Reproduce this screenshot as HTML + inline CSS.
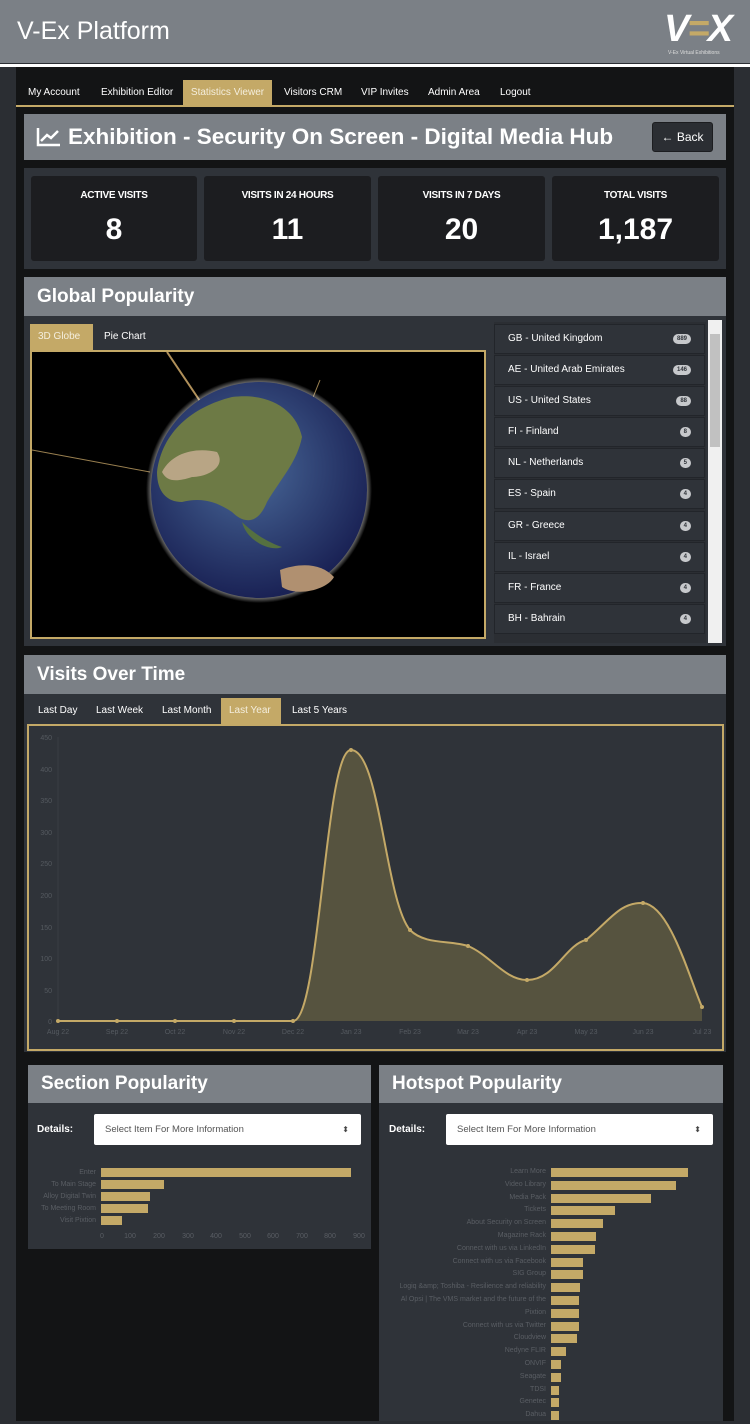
<!DOCTYPE html>
<html><head><meta charset="utf-8"><style>
*{box-sizing:border-box;margin:0;padding:0}
body{width:750px;height:1421px;background:#2b2e33;font-family:"Liberation Sans",sans-serif;color:#fff;position:relative;overflow:hidden}
.a{position:absolute}
.hdr{left:0;top:0;width:750px;height:63px;background:#7b8086}
.gray{background:#7b8086}
.pan{background:#2f3339}
.card{background:#1c1d20;border-radius:3px;text-align:center}
.card .l{font-size:10px;font-weight:bold;margin-top:14px;letter-spacing:-0.3px}
.card .n{font-size:30px;font-weight:bold;margin-top:12px}
.tab{font-size:10px;top:0;height:26px;line-height:26px;padding:0 8px}
.li{left:494px;width:211px;height:30px;background:#2f3339;border:1px solid #22252a;font-size:10px;line-height:28px;padding-left:13px}
.li b{position:absolute;right:13px;top:9px;background:#c7c9cc;color:#2f3339;font-size:6px;border-radius:6px;padding:1px 4px;line-height:8px}
.h2{font-size:19px;font-weight:bold;padding-left:13px}
.sel{background:#fff;border-radius:2px;color:#555;font-size:9.5px;line-height:31px;padding-left:11px}
.sel:after{content:"⬍";position:absolute;right:12px;font-size:8px;color:#444}
.bar{background:#c4a967;height:9px}
.lb{font-size:7px;color:#5a5e64;text-align:right}
.ax{position:absolute;top:1233px;font-size:7px;color:#5a5e64;width:20px;margin-left:-10px;text-align:center}
</style></head><body>
<div class="a hdr"></div>
<div class="a" style="left:17px;top:17px;font-size:25px;color:#fff">V-Ex Platform</div>
<div class="a" style="left:664px;top:9px;font-size:38px;font-style:italic;font-weight:bold;color:#fff;letter-spacing:-2px;line-height:40px">V<span style="color:#c4a967">=</span>X</div>
<div class="a" style="left:668px;top:50px;font-size:5px;color:#ddd">V-Ex Virtual Exhibitions</div>
<div class="a" style="left:0;top:64px;width:750px;height:3px;background:#fff"></div>
<div class="a" style="left:16px;top:67px;width:718px;height:1354px;background:#131415"></div>
<div class="a" style="left:28px;top:87px;font-size:10px">My Account</div>
<div class="a" style="left:101px;top:87px;font-size:10px">Exhibition Editor</div>
<div class="a" style="left:183px;top:80px;width:89px;height:26px;background:#c4a967;font-size:10px;line-height:25px;text-align:center;color:#f4eedd">Statistics Viewer</div>
<div class="a" style="left:284px;top:87px;font-size:10px">Visitors CRM</div>
<div class="a" style="left:361px;top:87px;font-size:10px">VIP Invites</div>
<div class="a" style="left:428px;top:87px;font-size:10px">Admin Area</div>
<div class="a" style="left:500px;top:87px;font-size:10px">Logout</div>
<div class="a" style="left:16px;top:105px;width:718px;height:2px;background:#c4a967"></div>

<div class="a gray" style="left:24px;top:114px;width:702px;height:46px"></div>
<svg class="a" style="left:36px;top:127px" width="25" height="20" viewBox="0 0 25 20"><path d="M2 1V18H24" stroke="#fff" stroke-width="2.5" fill="none"/><path d="M5 14L11 8L15 11L22 4" stroke="#fff" stroke-width="2.5" fill="none"/></svg>
<div class="a" style="left:68px;top:124px;font-size:22.5px;font-weight:bold;white-space:nowrap">Exhibition - Security On Screen - Digital Media Hub</div>
<div class="a" style="left:652px;top:122px;width:61px;height:30px;background:#2b2e33;border:1px solid #1c1d20;border-radius:3px;font-size:12px;line-height:28px;text-align:center;white-space:nowrap"><b>←</b> Back</div>

<div class="a pan" style="left:24px;top:168px;width:702px;height:101px"></div>
<div class="a card" style="left:31px;top:176px;width:166px;height:85px"><div class="l">ACTIVE VISITS</div><div class="n">8</div></div>
<div class="a card" style="left:204px;top:176px;width:167px;height:85px"><div class="l">VISITS IN 24 HOURS</div><div class="n">11</div></div>
<div class="a card" style="left:378px;top:176px;width:167px;height:85px"><div class="l">VISITS IN 7 DAYS</div><div class="n">20</div></div>
<div class="a card" style="left:552px;top:176px;width:167px;height:85px"><div class="l">TOTAL VISITS</div><div class="n">1,187</div></div>

<div class="a gray h2" style="left:24px;top:277px;width:702px;height:39px;line-height:39px">Global Popularity</div>
<div class="a pan" style="left:24px;top:316px;width:702px;height:330px"></div>
<div class="a tab" style="left:30px;top:324px;width:63px;background:#c4a967;color:#f4eedd">3D Globe</div>
<div class="a tab" style="left:96px;top:324px">Pie Chart</div>
<div class="a" style="left:30px;top:350px;width:456px;height:289px;background:#000;border:2px solid #c4a967;overflow:hidden">
<svg width="452" height="285"><defs><radialGradient id="g" cx="45%" cy="40%" r="60%"><stop offset="0" stop-color="#4a6a9a"/><stop offset="1" stop-color="#1a2255"/></radialGradient><radialGradient id="gw" cx="50%" cy="50%" r="50%"><stop offset=".9" stop-color="#fff" stop-opacity=".9"/><stop offset="1" stop-color="#fff" stop-opacity="0"/></radialGradient></defs>
<line x1="135" y1="0" x2="170" y2="52" stroke="#b0905a" stroke-width="2"/><line x1="0" y1="98" x2="118" y2="120" stroke="#9a8050"/><line x1="288" y1="28" x2="280" y2="48" stroke="#9a8050"/>
<circle cx="227" cy="138" r="113" fill="url(#gw)"/>
<circle cx="227" cy="138" r="108" fill="url(#g)"/>
<path d="M125 120C130 80 160 55 200 45C240 40 265 60 270 85C265 110 250 125 235 150C225 175 210 170 200 160C185 150 170 145 150 150C135 150 125 140 125 120Z" fill="#6d7a45"/>
<path d="M130 120C140 100 165 95 185 100C195 115 175 125 160 125C145 130 135 130 130 120Z" fill="#b8a585"/>
<path d="M210 170C220 180 235 190 250 195C240 200 215 190 210 170Z" fill="#557040"/>
<path d="M248 218C270 210 290 212 302 225C295 238 265 245 250 235Z" fill="#b09070"/>
</svg></div>
<div class="a" style="left:494px;top:322px;width:212px;height:321px;background:#2b2e33"></div>
<div class="a li" style="top:324px">GB - United Kingdom<b>889</b></div>
<div class="a li" style="top:355px">AE - United Arab Emirates<b>146</b></div>
<div class="a li" style="top:386px">US - United States<b>88</b></div>
<div class="a li" style="top:417px">FI - Finland<b>8</b></div>
<div class="a li" style="top:448px">NL - Netherlands<b>5</b></div>
<div class="a li" style="top:479px">ES - Spain<b>4</b></div>
<div class="a li" style="top:511px">GR - Greece<b>4</b></div>
<div class="a li" style="top:542px">IL - Israel<b>4</b></div>
<div class="a li" style="top:573px">FR - France<b>4</b></div>
<div class="a li" style="top:604px">BH - Bahrain<b>4</b></div>
<div class="a" style="left:708px;top:320px;width:14px;height:323px;background:#f0f0f0"></div>
<div class="a" style="left:710px;top:334px;width:10px;height:113px;background:#c1c1c1"></div>

<div class="a gray h2" style="left:24px;top:655px;width:702px;height:39px;line-height:39px">Visits Over Time</div>
<div class="a pan" style="left:24px;top:694px;width:702px;height:358px"></div>
<div class="a tab" style="left:30px;top:698px">Last Day</div>
<div class="a tab" style="left:88px;top:698px">Last Week</div>
<div class="a tab" style="left:154px;top:698px">Last Month</div>
<div class="a tab" style="left:221px;top:698px;width:60px;background:#c4a967;color:#f4eedd">Last Year</div>
<div class="a tab" style="left:284px;top:698px">Last 5 Years</div>
<div class="a" style="left:27px;top:724px;width:697px;height:327px;border:2px solid #c4a967"></div>
<svg class="a" style="left:0;top:0" width="750" height="1060">
<g fill="#555a60" font-size="7" font-family="Liberation Sans" text-anchor="end">
<text x="52" y="740">450</text><text x="52" y="772">400</text><text x="52" y="803">350</text><text x="52" y="835">300</text><text x="52" y="866">250</text><text x="52" y="898">200</text><text x="52" y="930">150</text><text x="52" y="961">100</text><text x="52" y="993">50</text><text x="52" y="1024">0</text></g>
<g fill="#555a60" font-size="7" font-family="Liberation Sans" text-anchor="middle">
<text x="58" y="1034">Aug 22</text><text x="117" y="1034">Sep 22</text><text x="175" y="1034">Oct 22</text><text x="234" y="1034">Nov 22</text><text x="293" y="1034">Dec 22</text><text x="351" y="1034">Jan 23</text><text x="410" y="1034">Feb 23</text><text x="468" y="1034">Mar 23</text><text x="527" y="1034">Apr 23</text><text x="586" y="1034">May 23</text><text x="643" y="1034">Jun 23</text><text x="702" y="1034">Jul 23</text></g>
<line x1="58" y1="737" x2="58" y2="1021" stroke="#3a3e44"/>
<path d="M58 1021L293 1021C320 1021 325 750 351 750C380 750 385 900 410 930C425 945 450 940 468 946C490 955 505 980 527 980C555 980 565 945 586 940C610 920 620 902 643 903C670 905 690 980 702 1007L702 1021Z" fill="#56533f" stroke="none"/>
<path d="M58 1021L293 1021C320 1021 325 750 351 750C380 750 385 900 410 930C425 945 450 940 468 946C490 955 505 980 527 980C555 980 565 945 586 940C610 920 620 902 643 903C670 905 690 980 702 1007" fill="none" stroke="#c4a967" stroke-width="2"/>
<g fill="#c4a967"><circle cx="58" cy="1021" r="2"/><circle cx="117" cy="1021" r="2"/><circle cx="175" cy="1021" r="2"/><circle cx="234" cy="1021" r="2"/><circle cx="293" cy="1021" r="2"/><circle cx="351" cy="750" r="2"/><circle cx="410" cy="930" r="2"/><circle cx="468" cy="946" r="2"/><circle cx="527" cy="980" r="2"/><circle cx="586" cy="940" r="2"/><circle cx="643" cy="903" r="2"/><circle cx="702" cy="1007" r="2"/></g>
</svg>

<div class="a gray h2" style="left:28px;top:1065px;width:343px;height:38px;line-height:38px">Section Popularity</div>
<div class="a pan" style="left:28px;top:1103px;width:343px;height:146px"></div>
<div class="a" style="left:37px;top:1124px;font-size:10px;font-weight:bold">Details:</div>
<div class="a sel" style="left:94px;top:1114px;width:267px;height:31px">Select Item For More Information</div>
<div class="a bar" style="left:101px;top:1168px;width:250px"></div>
<div class="a bar" style="left:101px;top:1180px;width:63px"></div>
<div class="a bar" style="left:101px;top:1192px;width:49px"></div>
<div class="a bar" style="left:101px;top:1204px;width:47px"></div>
<div class="a bar" style="left:101px;top:1216px;width:21px"></div>
<div class="a lb" style="left:20px;top:1167px;width:76px;line-height:12px">Enter<br>To Main Stage<br>Alloy Digital Twin<br>To Meeting Room<br>Visit Pixtion</div>
<div class="ax" style="left:102px">0</div><div class="ax" style="left:130px">100</div><div class="ax" style="left:159px">200</div><div class="ax" style="left:188px">300</div><div class="ax" style="left:216px">400</div><div class="ax" style="left:245px">500</div><div class="ax" style="left:273px">600</div><div class="ax" style="left:302px">700</div><div class="ax" style="left:330px">800</div><div class="ax" style="left:359px">900</div>

<div class="a gray h2" style="left:379px;top:1065px;width:344px;height:38px;line-height:38px">Hotspot Popularity</div>
<div class="a pan" style="left:379px;top:1103px;width:344px;height:318px"></div>
<div class="a" style="left:389px;top:1124px;font-size:10px;font-weight:bold">Details:</div>
<div class="a sel" style="left:446px;top:1114px;width:267px;height:31px">Select Item For More Information</div>
<div class="a lb" style="left:379px;top:1166px;width:167px;line-height:12.8px;white-space:nowrap;overflow:hidden">Learn More<br>Video Library<br>Media Pack<br>Tickets<br>About Security on Screen<br>Magazine Rack<br>Connect with us via LinkedIn<br>Connect with us via Facebook<br>SIG Group<br>Logiq &amp;amp; Toshiba - Resilience and reliability<br>Al Opsi | The VMS market and the future of the<br>Pixtion<br>Connect with us via Twitter<br>Cloudview<br>Nedyne FLIR<br>ONVIF<br>Seagate<br>TDSI<br>Genetec<br>Dahua</div>
<div class="a" style="left:551px;top:1168px">
<div class="bar" style="width:137px;margin-bottom:3.8px"></div>
<div class="bar" style="width:125px;margin-bottom:3.8px"></div>
<div class="bar" style="width:100px;margin-bottom:3.8px"></div>
<div class="bar" style="width:64px;margin-bottom:3.8px"></div>
<div class="bar" style="width:52px;margin-bottom:3.8px"></div>
<div class="bar" style="width:45px;margin-bottom:3.8px"></div>
<div class="bar" style="width:44px;margin-bottom:3.8px"></div>
<div class="bar" style="width:32px;margin-bottom:3.8px"></div>
<div class="bar" style="width:32px;margin-bottom:3.8px"></div>
<div class="bar" style="width:29px;margin-bottom:3.8px"></div>
<div class="bar" style="width:28px;margin-bottom:3.8px"></div>
<div class="bar" style="width:28px;margin-bottom:3.8px"></div>
<div class="bar" style="width:28px;margin-bottom:3.8px"></div>
<div class="bar" style="width:26px;margin-bottom:3.8px"></div>
<div class="bar" style="width:15px;margin-bottom:3.8px"></div>
<div class="bar" style="width:10px;margin-bottom:3.8px"></div>
<div class="bar" style="width:10px;margin-bottom:3.8px"></div>
<div class="bar" style="width:8px;margin-bottom:3.8px"></div>
<div class="bar" style="width:8px;margin-bottom:3.8px"></div>
<div class="bar" style="width:8px;margin-bottom:3.8px"></div>
</div>
</body></html>
